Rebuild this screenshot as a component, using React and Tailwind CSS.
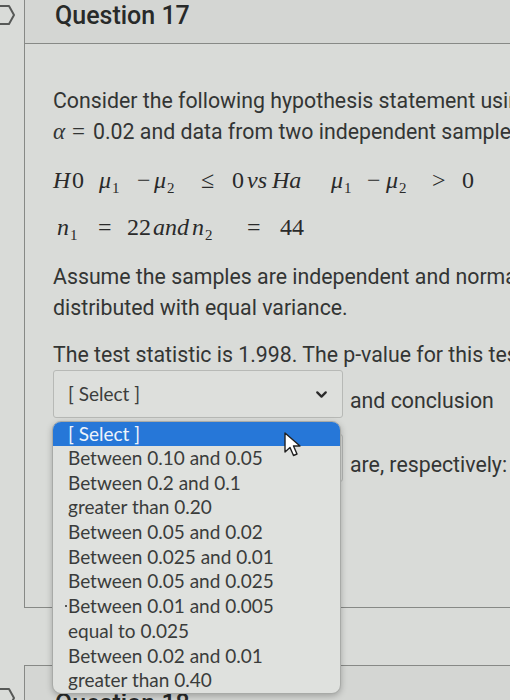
import React from "react";
import { ChevronDown } from "lucide-react";

const options = [
  "Between 0.10 and 0.05",
  "Between 0.2 and 0.1",
  "greater than 0.20",
  "Between 0.05 and 0.02",
  "Between 0.025 and 0.01",
  "Between 0.05 and 0.025",
  "Between 0.01 and 0.005",
  "equal to 0.025",
  "Between 0.02 and 0.01",
  "greater than 0.40",
];

// math tokens: [text, italic, sub, width]
const hypothesis = [
  ["H", true, null, 19],
  ["0", false, null, 27],
  ["μ", true, "1", 38],
  ["−", false, null, 17],
  ["μ", true, "2", 47],
  ["≤", false, null, 31],
  ["0", false, null, 15],
  ["vs", true, null, 25],
  ["Ha", true, null, 59],
  ["μ", true, "1", 36],
  ["−", false, null, 19],
  ["μ", true, "2", 46],
  [">", false, null, 30],
  ["0", false, null, 20],
];

const sizes = [
  ["n", true, "1", 41],
  ["=", false, null, 29],
  ["22", false, null, 26],
  ["and", true, null, 39],
  ["n", true, "2", 55],
  ["=", false, null, 33],
  ["44", false, null, 30],
];

function FlagIcon() {
  return (
    <svg width="16" height="22" viewBox="0 0 16 22" fill="none">
      <path d="M-6 2 H9 L14 11 L9 20 H-6" stroke="#575957" strokeWidth="2" strokeLinejoin="round" />
    </svg>
  );
}

function Cursor() {
  return (
    <svg width="22" height="28" viewBox="0 0 22 28" className="absolute left-[230px] top-[9px]">
      <path d="M2 2 L2 21 L7 16.5 L10.5 24.5 L14 23 L10.5 15 L17 15 Z" fill="#ffffff" stroke="#222" strokeWidth="1.4" strokeLinejoin="round" />
    </svg>
  );
}

function SelectBox({ label = true, children }) {
  return (
    <div className="relative shrink-0 w-[290px] h-[48px] border border-[#b7b9b6] rounded-[3px] bg-[#dddfdc] flex items-center justify-between pl-[14px] pr-[12px]">
      <span className="font-['Lato','Open_Sans',sans-serif] text-[19px] text-[#3b3d3c]">{label ? "[ Select ]" : ""}</span>
      <ChevronDown size={17} strokeWidth={3.2} className="text-[#2a2a2a]" />
      {children}
    </div>
  );
}

function Dropdown() {
  return (
    <div className="absolute left-[-2px] top-[50px] w-[289px] h-[273px] z-10 bg-[#dfe1de] border border-[#a8aaa7] rounded-[9px] shadow-[0_2px_6px_rgba(0,0,0,0.25)] overflow-hidden font-['Lato','Open_Sans',sans-serif] text-[19px] text-[#3a3c3b]">
      <div className="relative h-[24px] bg-[#2677d8] text-[#eef4fb] pl-[15px] leading-[24px]">
        [ Select ]
        <Cursor />
      </div>
      {options.map((o, i) => (
        <div key={o} className="relative h-[24.7px] leading-[24.7px] pl-[15px] whitespace-nowrap">
          {i === 6 && <span className="absolute left-[12px] top-[11px] w-[2px] h-[2px] bg-[#555]" />}
          {o}
        </div>
      ))}
    </div>
  );
}

function MathLine({ tokens, className }) {
  return (
    <div className={"h-[47px] flex items-center whitespace-nowrap font-['Liberation_Serif','DejaVu_Serif',serif] text-[24px] text-[#2a2a2a] " + className}>
      {tokens.map(([t, it, sub, w], i) => (
        <span key={i} className="shrink-0" style={{ width: w }}>
          <span className={it ? "italic" : ""}>{t}</span>
          {sub && <span className="text-[15px] relative top-[5px] ml-[1px]">{sub}</span>}
        </span>
      ))}
    </div>
  );
}

export default function App() {
  return (
    <div className="relative w-[510px] h-[700px] overflow-hidden bg-[#d9dbd8] font-['Roboto','Liberation_Sans',sans-serif] text-[#333534]">
      {/* question 17 */}
      <div className="flex">
        <div className="w-[24px] shrink-0 pt-[4px]">
          <FlagIcon />
        </div>
        <div className="w-[640px] shrink-0 border-l border-b border-[#878986]">
          <div className="h-[44px] border-b border-[#878986] bg-[#d4d6d3] pl-[30px]">
            <div className="text-[25px] font-medium leading-[32px] text-[#282a29]">Question 17</div>
          </div>
          <div className="pl-[28px] pt-[41px] h-[563px] text-[21.3px]">
            <div className="leading-[31px] whitespace-nowrap">Consider the following hypothesis statement using</div>
            <div className="leading-[31px] whitespace-nowrap flex items-baseline">
              <span className="font-['Liberation_Serif',serif] italic text-[23px] w-[19px]">α</span>
              <span className="font-['Liberation_Serif',serif] text-[23px] w-[21px]">=</span>
              <span>0.02 and data from two independent samples</span>
            </div>
            <MathLine tokens={hypothesis} className="mt-[9px]" />
            <MathLine tokens={sizes} className="pl-[4px]" />
            <div className="mt-[11px] leading-[31px] whitespace-nowrap">Assume the samples are independent and normally</div>
            <div className="leading-[31px] whitespace-nowrap">distributed with equal variance.</div>
            <div className="mt-[16px] leading-[31px] whitespace-nowrap">The test statistic is 1.998. The p-value for this test</div>
            <div className="flex items-start">
              <SelectBox>
                <Dropdown />
              </SelectBox>
              <div className="ml-[7px] mt-[15px] leading-[31px] whitespace-nowrap">and conclusion</div>
            </div>
            <div className="mt-[16px] flex items-start">
              <SelectBox label={false} />
              <div className="ml-[7px] mt-[15px] leading-[31px] whitespace-nowrap">are, respectively:</div>
            </div>
          </div>
        </div>
      </div>

      {/* question 18 */}
      <div className="flex mt-[57px]">
        <div className="w-[24px] shrink-0 pt-[22px]">
          <FlagIcon />
        </div>
        <div className="w-[640px] shrink-0 border-l border-t border-[#878986]">
          <div className="h-[66px] bg-[#d4d6d3] pl-[30px] pt-[22px]">
            <div className="text-[25px] font-medium leading-[32px] text-[#282a29]">Question 18</div>
          </div>
        </div>
      </div>
    </div>
  );
}
